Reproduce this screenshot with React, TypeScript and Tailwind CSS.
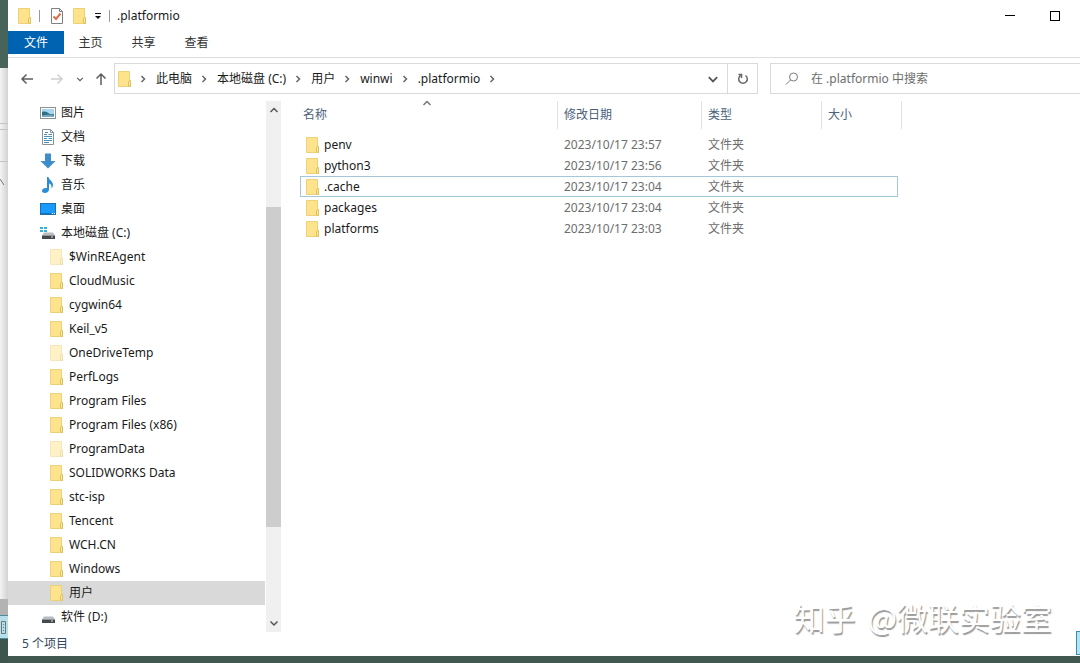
import { useState } from "react";
import type { ReactNode } from "react";

const places = [
  { name: "图片", icon: <PictureIcon /> },
  { name: "文档", icon: <DocumentIcon /> },
  { name: "下载", icon: <DownloadIcon /> },
  { name: "音乐", icon: <MusicIcon /> },
  { name: "桌面", icon: <DesktopIcon /> },
  { name: "本地磁盘 (C:)", icon: <DriveIcon system /> },
];

const folders = [
  { name: "$WinREAgent", hidden: true },
  { name: "CloudMusic" },
  { name: "cygwin64" },
  { name: "Keil_v5" },
  { name: "OneDriveTemp", hidden: true },
  { name: "PerfLogs" },
  { name: "Program Files" },
  { name: "Program Files (x86)" },
  { name: "ProgramData", hidden: true },
  { name: "SOLIDWORKS Data" },
  { name: "stc-isp" },
  { name: "Tencent" },
  { name: "WCH.CN" },
  { name: "Windows" },
  { name: "用户" },
];

const files = [
  { name: "penv", date: "2023/10/17 23:57" },
  { name: "python3", date: "2023/10/17 23:56" },
  { name: ".cache", date: "2023/10/17 23:04" },
  { name: "packages", date: "2023/10/17 23:04" },
  { name: "platforms", date: "2023/10/17 23:03" },
];

const crumbs = ["此电脑", "本地磁盘 (C:)", "用户", "winwi", ".platformio"];

function FolderIcon({ hidden = false }: { hidden?: boolean }) {
  return (
    <svg width="14" height="16" viewBox="0 0 14 16" className={`shrink-0 ${hidden ? "opacity-50" : ""}`}>
      <path d="M.5.5h11v9.5h1v5.5H.5z" fill="#fde48c" stroke="#ecd07a" />
      <path d="M10.500 15V11l1-1.500h1V15.500z" fill="#ffe99c" stroke="#e0c05c" />
    </svg>
  );
}

function PictureIcon() {
  return (
    <svg width="16" height="16" viewBox="0 0 16 16">
      <rect x=".5" y="2.500" width="15" height="11" fill="#fff" stroke="#8a9299" />
      <path d="M2 4h12v8H2z" fill="#a9d5ee" />
      <path d="M2 7c3-1 5 0 7 1.500s3 .5 5 .5v3H2z" fill="#2f6f86" />
      <path d="M2 10.500c4-1 8-1 12 0V12H2z" fill="#77a9bd" />
    </svg>
  );
}

function DocumentIcon() {
  return (
    <svg width="16" height="16" viewBox="0 0 16 16">
      <path d="M2.500.5h8l3 3v12h-11z" fill="#fff" stroke="#87929a" />
      <path d="M10.500.5v3h3" fill="none" stroke="#87929a" />
      <path d="M5 3.500h3M4 5.500h3M8.500 5.500H12M4 7.500h8M4 9.500h3M8.500 9.500H12M4 11.500h8M4 13.500h5" stroke="#4a90b8" />
    </svg>
  );
}

function DownloadIcon() {
  return (
    <svg width="16" height="16" viewBox="0 0 16 16">
      <path d="M5 .5h6V8h4.500L8 15.500.5 8H5z" fill="#3d8dcd" />
    </svg>
  );
}

function MusicIcon() {
  return (
    <svg width="16" height="16" viewBox="0 0 16 16">
      <path d="M7 0h1.500c.3 3 4.500 3.800 4.500 8 0 1.500-.6 2.500-1.500 3.500.5-3-.8-4.500-2.500-5V12.500C9 14.500 7 16 5 16s-3-1-3-2.300C2 12 4 10.700 7 11z" fill="#2c8fd6" />
    </svg>
  );
}

function DesktopIcon() {
  return (
    <svg width="16" height="16" viewBox="0 0 16 16">
      <rect x=".5" y="2.500" width="15" height="11" fill="#189bfa" stroke="#1b6fae" />
      <path d="M1 12.500h10" stroke="#1273bd" />
      <path d="M12 12.500h1M14 12.500h1" stroke="#fff" />
    </svg>
  );
}

function DriveIcon({ system = false }: { system?: boolean }) {
  return (
    <svg width="16" height="16" viewBox="0 0 16 16">
      {system && <path d="M0 2h3v2H0zM4 2h3v2H4zM0 5h3v2H0zM4 5h3v2H4z" fill="#35b3dc" />}
      <path d="M4 7.500h9l2 3H2z" fill="#b9bcbe" />
      <path d="M2 10.500h13V14H2z" fill="#46494c" />
      <path d="M11 12h2" stroke="#d8e6d8" />
    </svg>
  );
}

function Chevron({ dir, size = 10, className = "" }: { dir: "up" | "down" | "right"; size?: number; className?: string }) {
  const d = { up: "M1.500 7 5 3.500 8.500 7", down: "M1.500 3.500 5 7l3.500-3.500", right: "M3.500 2 6.500 5l-3 3" }[dir];
  return (
    <svg width={size} height={size} viewBox="0 0 10 10" fill="none" stroke="currentColor" strokeWidth="1.500" className={`shrink-0 ${className}`}>
      <path d={d} />
    </svg>
  );
}

function Backdrop() {
  return (
    <div className="flex w-2 shrink-0 flex-col bg-gradient-to-r from-[#f4f4f4] to-[#d2d2d2]">
      <div className="h-17 bg-[#48645a]" />
      <div className="h-14 border-b border-[#c4c4c4]" />
      <div className="h-1.5 border-b border-[#c4c4c4]" />
      <div className="h-8 border-b border-[#c4c4c4]" />
      <svg width="8" height="20" viewBox="0 0 8 20" className="mt-3" fill="none" stroke="#777">
        <path d="M0 5l4 6" />
      </svg>
      <div className="grow" />
      <div className="h-4 bg-[#b3b3b3]" />
      <div className="h-6 border-y border-[#4e8b9b] bg-[#b7dfe9]">
        <svg width="8" height="22" viewBox="0 0 8 22" fill="none" stroke="#68777c">
          <path d="M1.500 5.500h4v12h-4zM3 8.500h1M3 11.500h1M3 14.500h1" />
        </svg>
      </div>
      <div className="h-6 bg-[#3d554d]" />
    </div>
  );
}

function TitleBar() {
  return (
    <header className="flex h-[31px] items-center pl-2.5">
      <FolderIcon />
      <span className="ml-[7px] h-3 w-px bg-[#999]" />
      <button aria-label="属性" className="ml-[11px]">
        <svg width="12" height="16" viewBox="0 0 12 16" fill="none">
          <path d="M.5.5h8l3 3v12H.5z" fill="#fff" stroke="#818181" />
          <path d="M8.500.5v3h3" stroke="#818181" />
          <path d="M2.500 8.500 5 11l4.500-5.500" stroke="#db7046" strokeWidth="2" />
        </svg>
      </button>
      <button aria-label="新建文件夹" className="ml-2.5">
        <FolderIcon />
      </button>
      <button aria-label="自定义快速访问工具栏" className="ml-[7px]">
        <svg width="8" height="8" viewBox="0 0 8 8">
          <path d="M1 1h6v1H1zM1 4h6L4 7z" fill="#111" />
        </svg>
      </button>
      <span className="mx-[7px] h-3 w-px bg-[#999]" />
      <h1>.platformio</h1>
      <div className="ml-auto flex">
        <button aria-label="最小化" className="flex h-[31px] w-[45px] items-center justify-center">
          <span className="h-px w-2.5 bg-black" />
        </button>
        <button aria-label="最大化" className="flex h-[31px] w-[45px] items-center justify-center">
          <span className="size-2.5 border border-black" />
        </button>
        <span className="w-[3px]" />
      </div>
    </header>
  );
}

function AddressBar() {
  return (
    <div className="flex items-center pt-[5px]">
      <div className="flex w-[106px] items-center pl-3 text-[#5d5d5d]">
        <button aria-label="后退">
          <svg width="14" height="12" viewBox="0 0 14 12" fill="none" stroke="currentColor" strokeWidth="1.500">
            <path d="M13 6H2M6.500 1.500 2 6l4.500 4.500" />
          </svg>
        </button>
        <button aria-label="前进" disabled className="ml-4 text-[#d0d0d0]">
          <svg width="14" height="12" viewBox="0 0 14 12" fill="none" stroke="currentColor" strokeWidth="1.500">
            <path d="M1 6h11M7.500 1.500 12 6l-4.500 4.500" />
          </svg>
        </button>
        <button aria-label="最近浏览的位置" className="ml-3">
          <Chevron dir="down" size={8} />
        </button>
        <button aria-label="向上" className="ml-[11px]">
          <svg width="12" height="14" viewBox="0 0 12 14" fill="none" stroke="currentColor" strokeWidth="1.500">
            <path d="M6 13V2M1.500 6.500 6 2l4.500 4.500" />
          </svg>
        </button>
      </div>
      <div className="flex h-[31px] grow items-center border border-[#d9d9d9] pl-[3px]">
        <FolderIcon />
        <Chevron dir="right" className="ml-1.5 text-[#666]" />
        {crumbs.map((c) => (
          <span key={c} className="flex items-center">
            <button className="ml-2 whitespace-nowrap">{c}</button>
            <Chevron dir="right" className="ml-[7px] text-[#666]" />
          </span>
        ))}
        <button aria-label="上一个位置" className="ml-auto mr-2 text-[#555]">
          <Chevron dir="down" size={12} />
        </button>
        <button aria-label="刷新" className="flex h-full w-[30px] items-center justify-center border-l border-[#d9d9d9]">
          <svg width="12" height="12" viewBox="0 0 12 12" fill="none" stroke="#666" strokeWidth="1.500">
            <path d="M8.500 2.500A4.300 4.300 0 1 1 3.500 2.500M1.500 1.500h3v3.500" />
          </svg>
        </button>
      </div>
      <label className="ml-3 flex h-[31px] w-[310px] shrink-0 items-center border-y border-l border-[#d9d9d9] pl-3.5">
        <svg width="14" height="14" viewBox="0 0 14 14" fill="none" stroke="#7b7b7b">
          <circle cx="8.500" cy="5" r="4" />
          <path d="M5.500 8 1 12.500" />
        </svg>
        <input type="search" aria-label="搜索" placeholder="在 .platformio 中搜索" className="ml-3 w-60 outline-none placeholder:text-[#6d6d6d]" />
      </label>
    </div>
  );
}

function TreeRow({ icon, name, nested, active, onClick }: { icon: ReactNode; name: string; nested?: boolean; active?: boolean; onClick: () => void }) {
  return (
    <li>
      <button
        onClick={onClick}
        className={`flex h-6 w-full items-center gap-[5px] text-left ${nested ? "pl-[42px]" : "pl-8"} ${active ? "bg-[#d9d9d9]" : ""}`}
      >
        {icon}
        {name}
      </button>
    </li>
  );
}

export default function App() {
  const [folder, setFolder] = useState("用户");
  const [file, setFile] = useState(".cache");

  return (
    <div className="relative flex h-screen min-h-[663px] bg-[#415850] font-['Noto_Sans','Noto_Sans_CJK_SC',sans-serif] text-xs text-[#1a1a1a]">
      <Backdrop />
      <div className="mb-[7px] flex min-w-0 grow flex-col bg-white">
        <TitleBar />
        <nav className="flex h-[27px] border-b border-[#dcdcdc] text-[#333]">
          <button className="h-[23px] w-14 bg-[#0063b1] text-white">文件</button>
          <button className="h-[23px] w-[53px]">主页</button>
          <button className="h-[23px] w-[53px]">共享</button>
          <button className="h-[23px] w-[53px]">查看</button>
        </nav>
        <AddressBar />

        <div className="flex min-h-0 grow pt-[7px]">
          <ul className="w-[257px] shrink-0">
            {places.map((p) => (
              <TreeRow key={p.name} {...p} active={folder === p.name} onClick={() => setFolder(p.name)} />
            ))}
            {folders.map((f) => (
              <TreeRow key={f.name} nested name={f.name} icon={<FolderIcon hidden={f.hidden} />} active={folder === f.name} onClick={() => setFolder(f.name)} />
            ))}
            <TreeRow name="软件 (D:)" icon={<DriveIcon />} active={folder === "软件 (D:)"} onClick={() => setFolder("软件 (D:)")} />
          </ul>
          <div className="ml-px flex w-[15px] shrink-0 flex-col bg-[#f0f0f0] text-[#555]">
            <button aria-label="向上滚动" className="flex h-[18px] items-center justify-center">
              <Chevron dir="up" />
            </button>
            <div className="mt-[88px] h-80 bg-[#cdcdcd]" />
            <button aria-label="向下滚动" className="mt-auto flex h-[18px] items-center justify-center">
              <Chevron dir="down" />
            </button>
          </div>

          <main className="ml-[19px] min-w-0 grow">
            <table className="w-[602px] table-fixed border-separate border-spacing-0 text-left">
              <colgroup>
                <col className="w-[258px]" />
                <col className="w-36" />
                <col className="w-[120px]" />
                <col className="w-[76px]" />
                <col className="w-1" />
              </colgroup>
              <thead className="text-[#4c607a]">
                <tr className="h-7">
                  <th className="relative border-r border-[#e2e2e2] pl-[3px] font-normal">
                    <button>名称</button>
                    <Chevron dir="up" className="absolute -top-[3px] left-[122px] text-[#777]" />
                  </th>
                  <th className="border-r border-[#e2e2e2] pl-1.5 font-normal"><button>修改日期</button></th>
                  <th className="border-r border-[#e2e2e2] pl-1.5 font-normal"><button>类型</button></th>
                  <th colSpan={2} className="border-r border-[#e2e2e2] pl-1.5 font-normal"><button>大小</button></th>
                </tr>
              </thead>
              <tbody className="text-[#6d6d6d]">
                <tr className="h-[5px]" />
                {files.map((f) => {
                  const edge = f.name === file ? "border-[#a3c9d9]" : "border-transparent";
                  return (
                    <tr key={f.name} className="h-[21px]" onClick={() => setFile(f.name)}>
                      <td className={`border-y border-l p-0 pl-[5px] ${edge}`}>
                        <span className="flex h-[19px] items-center gap-1 text-[#1a1a1a]">
                          <FolderIcon />
                          {f.name}
                        </span>
                      </td>
                      <td className={`border-y p-0 pl-1.5 ${edge}`}>{f.date}</td>
                      <td className={`border-y p-0 pl-1.5 ${edge}`}>文件夹</td>
                      <td className={`border-y border-r p-0 ${edge}`} />
                      <td className="p-0" />
                    </tr>
                  );
                })}
              </tbody>
            </table>
          </main>
        </div>

        <footer className="flex h-6 items-center pl-3.5 text-[#33475f]">5 个项目</footer>
      </div>

      <p className="absolute bottom-6 right-7 flex gap-3 font-['Noto_Sans_CJK_SC',sans-serif] text-[31px] leading-11 text-white [text-shadow:1px_2px_1px_#999]">
        <span>知乎</span>
        <span>@微联实验室</span>
      </p>
      <div className="absolute bottom-2 right-0 h-6 w-1 border-y border-l border-[#3f8eac] bg-[#aee6f8]" />
    </div>
  );
}
